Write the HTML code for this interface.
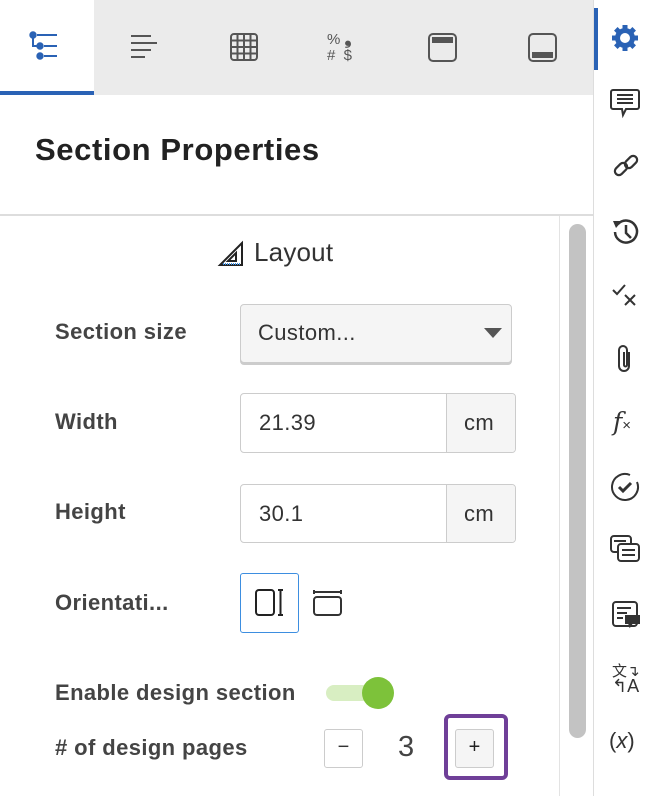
<!DOCTYPE html>
<html><head><meta charset="utf-8"><style>
*{box-sizing:border-box;margin:0;padding:0}
body{width:654px;height:796px;overflow:hidden;background:#fff;font-family:"Liberation Sans",sans-serif;position:relative;color:#404040}
.abs{position:absolute}
.lbl{position:absolute;left:55px;font-weight:bold;font-size:22px;color:#444;letter-spacing:0.4px}
svg{position:absolute;overflow:visible}
.t{letter-spacing:0.4px}
</style></head><body>
<!-- tab bar -->
<div class="abs" style="left:0;top:0;width:593px;height:95px;background:#ebebeb"></div>
<div class="abs" style="left:0;top:0;width:94px;height:95px;background:#fff"></div>
<div class="abs" style="left:0;top:91px;width:94px;height:4px;background:#2a62b5"></div>
<svg style="left:0;top:0" width="60" height="60" fill="none" stroke="#2a62b5" stroke-width="2">
<circle cx="33" cy="35" r="2.7" fill="#2a62b5"/><circle cx="40" cy="46" r="2.7" fill="#2a62b5"/><circle cx="40" cy="56" r="2.7" fill="#2a62b5"/>
<path d="M33 35v11h7M37 35h20M44 46h13M44 56h13"/></svg>
<svg style="left:130px;top:34px" width="28" height="24" stroke="#555" stroke-width="2"><path d="M1 2h20M1 9h26M1 16h20M1 23h14"/></svg>
<svg style="left:230px;top:33px" width="28" height="28" fill="none" stroke="#555" stroke-width="2"><rect x="1" y="1" width="26" height="26" rx="3"/><path d="M7.5 1v26M14 1v26M20.5 1v26M1 7.5h26M1 14h26M1 20.5h26"/></svg>
<div class="abs" style="left:327px;top:30px;font-size:15px;color:#555;line-height:16px">%&nbsp;<b style="font-size:18px">&#x275F;</b><br>#&nbsp;&nbsp;$</div>
<svg style="left:428px;top:33px" width="30" height="28" fill="none" stroke="#555" stroke-width="2"><rect x="1" y="1" width="27" height="27" rx="4"/><rect x="4" y="4" width="21" height="6" fill="#555" stroke="none"/></svg>
<svg style="left:528px;top:33px" width="30" height="28" fill="none" stroke="#555" stroke-width="2"><rect x="1" y="1" width="27" height="27" rx="4"/><rect x="4" y="19" width="21" height="6" fill="#555" stroke="none"/></svg>
<!-- title -->
<div class="abs" style="left:35px;top:132px;font-size:31px;font-weight:bold;color:#222;letter-spacing:0.6px">Section Properties</div>
<div class="abs" style="left:0;top:214px;width:593px;height:2px;background:#ddd"></div>
<!-- scroll -->
<div class="abs" style="left:559px;top:216px;width:1px;height:580px;background:#e3e3e3"></div>
<div class="abs" style="left:569px;top:224px;width:17px;height:514px;background:#c3c3c3;border-radius:9px"></div>
<!-- sidebar -->
<div class="abs" style="left:593px;top:0;width:1px;height:796px;background:#ddd"></div>
<div class="abs" style="left:594px;top:8px;width:4px;height:62px;background:#2a62b5"></div>
<!-- layout -->
<svg style="left:218px;top:241px" width="26" height="26" fill="none" stroke="#222" stroke-width="2"><path d="M24 2L2 24h22z M18 12v8h-8z"/><path d="M5 23h18" stroke="#3d8ee0" stroke-dasharray="1 1"/></svg>
<div class="abs" style="left:254px;top:237px;font-size:26px;color:#333;letter-spacing:0.2px">Layout</div>
<div class="lbl" style="top:319px">Section size</div>
<div class="abs" style="left:240px;top:304px;width:272px;height:59px;background:#f5f5f5;border:1px solid #ccc;border-radius:4px;box-shadow:0 2px 0 #ccc"></div>
<div class="abs t" style="left:258px;top:320px;font-size:22px;color:#333">Custom...</div>
<svg style="left:484px;top:328px" width="18" height="10"><path d="M0 0h18L9 10z" fill="#555"/></svg>
<div class="lbl" style="top:409px">Width</div>
<div class="abs" style="left:240px;top:393px;width:276px;height:60px;border:1px solid #ccc;border-radius:4px;overflow:hidden"><div class="abs" style="left:205px;top:0;width:71px;height:60px;background:#f5f5f5;border-left:1px solid #ccc"></div></div>
<div class="abs t" style="left:259px;top:410px;font-size:22px;color:#333">21.39</div>
<div class="abs t" style="left:464px;top:410px;font-size:22px;color:#333">cm</div>
<div class="lbl" style="top:499px">Height</div>
<div class="abs" style="left:240px;top:484px;width:276px;height:59px;border:1px solid #ccc;border-radius:4px;overflow:hidden"><div class="abs" style="left:205px;top:0;width:71px;height:59px;background:#f5f5f5;border-left:1px solid #ccc"></div></div>
<div class="abs t" style="left:259px;top:501px;font-size:22px;color:#333">30.1</div>
<div class="abs t" style="left:464px;top:501px;font-size:22px;color:#333">cm</div>
<div class="lbl" style="top:590px">Orientati...</div>
<div class="abs" style="left:240px;top:573px;width:59px;height:60px;border:1.5px solid #3d8ee0;border-radius:3px"></div>
<svg style="left:255px;top:589px" width="30" height="28" fill="none" stroke="#222" stroke-width="2"><rect x="1" y="1" width="18" height="25" rx="3"/><path d="M23 1h5M25.5 1v25M23 26h5"/></svg>
<svg style="left:313px;top:589px" width="30" height="28" fill="none" stroke="#333" stroke-width="2"><path d="M1 1v4M28 1v4M1 3h27"/><rect x="1" y="8" width="27" height="18" rx="3"/></svg>
<div class="lbl" style="top:680px">Enable design section</div>
<div class="abs" style="left:326px;top:685px;width:60px;height:16px;border-radius:8px;background:#d8eec2"></div>
<div class="abs" style="left:362px;top:677px;width:32px;height:32px;border-radius:50%;background:#7dc23a"></div>
<div class="lbl" style="top:735px">#&nbsp;of design pages</div>
<div class="abs" style="left:324px;top:729px;width:39px;height:39px;border:1.5px solid #ccc;border-radius:3px;background:#fff;text-align:center;font-size:20px;line-height:34px;color:#333">−</div>
<div class="abs" style="left:398px;top:731px;font-size:29px;color:#444">3</div>
<div class="abs" style="left:444px;top:714px;width:64px;height:66px;border:4px solid #6f3f98;border-radius:6px"></div>
<div class="abs" style="left:455px;top:729px;width:39px;height:39px;border:1.5px solid #ccc;border-radius:3px;background:#f5f5f5;text-align:center;font-size:20px;line-height:35px;color:#222">+</div>
<!-- sidebar icons -->
<svg style="left:611px;top:24px" width="28" height="28" viewBox="0 0 28 28"><g fill="#2a62b5"><circle cx="14" cy="14" r="10"/><g stroke="#2a62b5" stroke-width="5"><path d="M14 1v26M1 14h26M4.8 4.8l18.4 18.4M23.2 4.8L4.8 23.2"/></g></g><circle cx="14" cy="14" r="5" fill="#fff"/></svg>
<svg style="left:610px;top:89px" width="30" height="30" fill="none" stroke="#333" stroke-width="2"><path d="M3 1h24a2 2 0 0 1 2 2v15a2 2 0 0 1-2 2H16l-3 6-1-6H3a2 2 0 0 1-2-2V3a2 2 0 0 1 2-2z"/><path d="M7 6h16M7 10h16M7 14h16"/></svg>
<svg style="left:613px;top:153px" width="26" height="26" fill="none" stroke="#333" stroke-width="2.2"><rect x="1" y="12" width="14" height="8" rx="4" transform="rotate(-45 8 16)"/><rect x="11" y="5" width="14" height="8" rx="4" transform="rotate(-45 18 9)"/></svg>
<svg style="left:611px;top:217px" width="30" height="30" fill="none" stroke="#333" stroke-width="2.5"><path d="M7 7A11 11 0 1 1 4 15"/><path d="M2 4l9 0-6 7z" fill="#333" stroke="none"/><path d="M15 8v8l5 5"/></svg>
<svg style="left:612px;top:283px" width="26" height="24" fill="none" stroke="#333" stroke-width="2"><path d="M1 7l4 4 8-9M13 12l10 10M23 12L13 22"/></svg>
<svg style="left:617px;top:344px" width="16" height="30" fill="none" stroke="#333" stroke-width="2"><path d="M12 8v14a5 5 0 0 1-10 0V6a4 4 0 0 1 8 0v15a1.5 1.5 0 0 1-3 0V8"/></svg>
<div class="abs" style="left:613px;top:407px;font-size:25px;font-style:italic;font-family:'DejaVu Serif',serif;color:#333">f<span style="font-size:15px;font-style:normal;font-family:'Liberation Sans'">×</span></div>
<svg style="left:610px;top:472px" width="30" height="30" fill="none" stroke="#333" stroke-width="2"><path d="M20 3A13 13 0 1 0 27 10"/><path d="M9 15l4 4 8-8" stroke-width="3"/></svg>
<svg style="left:610px;top:535px" width="30" height="28" fill="none" stroke="#333" stroke-width="2"><rect x="1" y="1" width="20" height="16" rx="3"/><rect x="8" y="9" width="21" height="17" rx="3" fill="#fff"/><path d="M4 6h12M12 15h13M12 20h13"/></svg>
<svg style="left:612px;top:601px" width="28" height="28" fill="none" stroke="#333" stroke-width="2"><rect x="1" y="1" width="24" height="24" rx="3"/><path d="M5 7h14M5 12h10M5 17h6"/><path d="M14 15h13v7h-7l-2 3-1-3h-3z" fill="#333"/></svg>
<div class="abs" style="left:612px;top:664px;font-size:15px;color:#333;line-height:15px;font-family:'Liberation Sans','Noto Sans CJK SC',sans-serif">文↴<br><span style="font-size:18px">↰A</span></div>
<div class="abs" style="left:609px;top:728px;font-size:22px;color:#333;font-family:'Liberation Sans',sans-serif">(<i>x</i>)</div>
</body></html>
